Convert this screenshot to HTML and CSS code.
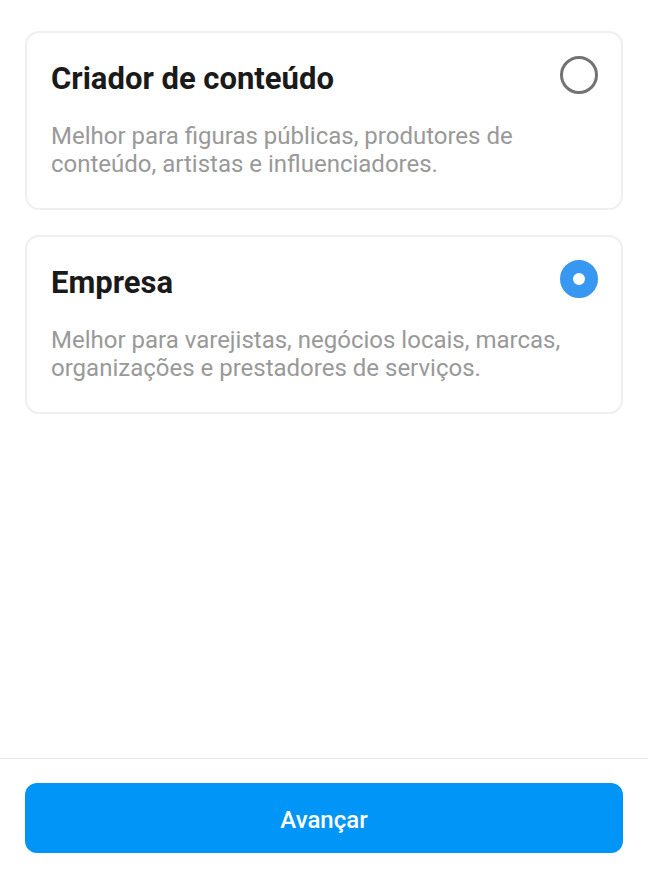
FILE: index.html
```html
<!DOCTYPE html>
<html lang="pt-BR">
<head>
    <meta charset="UTF-8">
    <meta name="viewport" content="width=device-width, initial-scale=1.0">
    <title>Tipo de conta</title>
    <link rel="stylesheet" href="styles.css">
</head>
<body>
    <form class="page" id="accountForm">
        <!-- Account type options -->
        <div class="options">
            <label class="option" for="creator">
                <span class="option-header">
                    <span class="option-title">Criador de conteúdo</span>
                    <input type="radio" class="option-radio" id="creator" name="accountType" value="creator">
                </span>
                <span class="option-text">Melhor para figuras públicas, produtores de conteúdo, artistas e influenciadores.</span>
            </label>

            <label class="option" for="business">
                <span class="option-header">
                    <span class="option-title">Empresa</span>
                    <input type="radio" class="option-radio" id="business" name="accountType" value="business" checked>
                </span>
                <span class="option-text">Melhor para varejistas, negócios locais, marcas, organizações e prestadores de serviços.</span>
            </label>
        </div>

        <div class="footer">
            <button type="submit" class="next-button">Avançar</button>
        </div>
    </form>
</body>
</html>
```
FILE: styles.css
```css
* {
    box-sizing: border-box;
}

body {
    margin: 0;
    font-family: Roboto, sans-serif;
    background-color: #ffffff;
    color: #1a1a1a;
}

.page {
    display: flex;
    flex-direction: column;
    min-height: 100vh;
}

.options {
    display: flex;
    flex-direction: column;
    gap: 25px;
    flex: 1;
    padding: 31px 25px;
}

.option {
    display: block;
    padding: 23px 23px 30px 24px;
    border: 2px solid #efefef;
    border-radius: 14px;
    cursor: pointer;
}

.option-header {
    display: flex;
    justify-content: space-between;
    align-items: flex-start;
    margin-bottom: 24px;
}

.option-title {
    padding-top: 4px;
    font-size: 31px;
    font-weight: 700;
    line-height: 38px;
}

.option-radio {
    appearance: none;
    width: 38px;
    height: 38px;
    margin: 0;
    border: 3px solid #737373;
    border-radius: 50%;
    background-color: #ffffff;
    cursor: pointer;
}

.option-radio:checked {
    border: 13px solid #3897f0;
}

.option-text {
    display: block;
    font-size: 24px;
    line-height: 28px;
    color: #999999;
}

.footer {
    padding: 24px 25px 17px;
    border-top: 1px solid #e8e8e8;
}

.next-button {
    display: block;
    width: 100%;
    height: 70px;
    padding: 3px 0 0;
    border: none;
    border-radius: 12px;
    background-color: #0095f6;
    color: #ffffff;
    font-family: inherit;
    font-size: 24px;
    font-weight: 500;
    cursor: pointer;
}
```
